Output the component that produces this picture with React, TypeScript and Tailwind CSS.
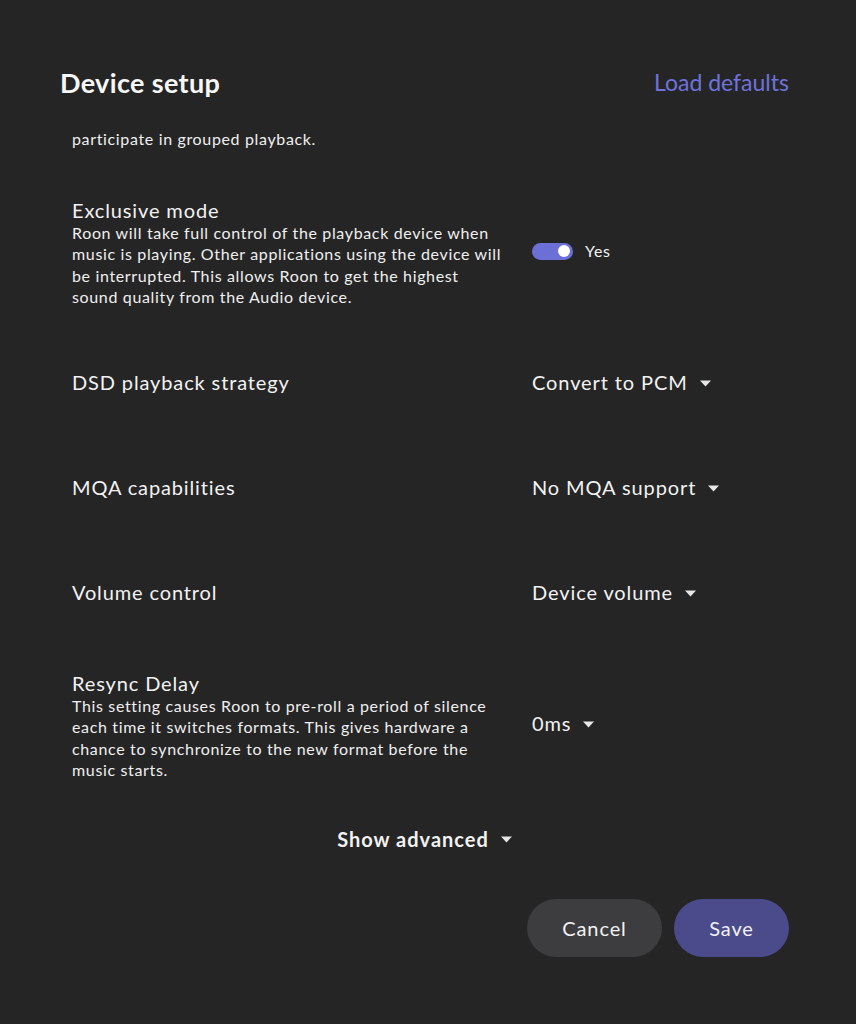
import React from "react";

function Caret({ className = "" }: { className?: string }) {
  return (
    <svg width="11" height="7" viewBox="0 0 11 7" className={className}>
      <polygon points="0,0.5 11,0.5 5.5,6.5" fill="#e6e6e6" />
    </svg>
  );
}

function SelectValue({ label, className = "" }: { label: string; className?: string }) {
  return (
    <div className={`flex items-center text-[20px] leading-[24px] tracking-[0.9px] text-[#f2f2f2] ${className}`}>
      <span>{label}</span>
      <Caret className="ml-[12px] mt-[4px]" />
    </div>
  );
}

function SimpleRow({ label, value, mt }: { label: string; value: string; mt: string }) {
  return (
    <div className={`flex items-center pl-[12px] ${mt}`}>
      <div className="w-[460px] shrink-0 text-[20px] leading-[24px] tracking-[0.87px] text-[#f2f2f2]">{label}</div>
      <SelectValue label={value} />
    </div>
  );
}

export default function App() {
  return (
    <div
      className="min-h-[1024px] w-full bg-[#252525] text-[#f2f2f2] antialiased"
      style={{ fontFamily: "Lato, 'Noto Sans', sans-serif" }}
    >
      <div className="pl-[60px] pr-[67px] pt-[66px]">
        <div className="flex items-start justify-between">
          <h1 className="text-[27px] leading-[33px] font-bold tracking-[0.35px] text-[#f7f7f7]">Device setup</h1>
          <button className="mt-[2px] text-[23px] leading-[29px] text-[#6f72dc]">Load defaults</button>
        </div>

        <div className="flex flex-col">
          <p className="mt-[29px] pl-[12px] text-[16px] leading-[21.5px] tracking-[0.65px] text-[#efefef]">
            participate in grouped playback.
          </p>

          {/* Exclusive mode */}
          <div className="mt-[48px] flex items-center pl-[12px]">
            <div className="w-[460px] shrink-0">
              <div className="text-[20px] leading-[24px] tracking-[0.87px] text-[#f2f2f2]">Exclusive mode</div>
              <div className="text-[16px] leading-[21.5px] tracking-[0.65px] text-[#efefef]">
                Roon will take full control of the playback device when
                <br />
                music is playing. Other applications using the device will
                <br />
                be interrupted. This allows Roon to get the highest
                <br />
                sound quality from the Audio device.
              </div>
            </div>
            <div className="mb-[3px] flex items-center">
              <div className="flex h-[17px] w-[41px] items-center justify-end rounded-full bg-[#6c6fd6] pr-[3px]">
                <div className="h-[12px] w-[12px] rounded-full bg-white" />
              </div>
              <span className="ml-[12px] text-[16px] leading-[20px] tracking-[0.65px] text-[#f2f2f2]">Yes</span>
            </div>
          </div>

          <SimpleRow label="DSD playback strategy" value="Convert to PCM" mt="mt-[62px]" />
          <SimpleRow label="MQA capabilities" value="No MQA support" mt="mt-[81px]" />
          <SimpleRow label="Volume control" value="Device volume" mt="mt-[81px]" />

          {/* Resync Delay */}
          <div className="mt-[67px] flex items-center pl-[12px]">
            <div className="w-[460px] shrink-0">
              <div className="text-[20px] leading-[24px] tracking-[0.87px] text-[#f2f2f2]">Resync Delay</div>
              <div className="text-[16px] leading-[21.5px] tracking-[0.65px] text-[#efefef]">
                This setting causes Roon to pre-roll a period of silence
                <br />
                each time it switches formats. This gives hardware a
                <br />
                chance to synchronize to the new format before the
                <br />
                music starts.
              </div>
            </div>
            <SelectValue label="0ms" className="mb-[6px]" />
          </div>

          {/* Show advanced */}
          <div className="mt-[46px] flex items-center justify-center">
            <span className="text-[20px] leading-[24px] font-bold tracking-[1px] text-[#f2f2f2]">Show advanced</span>
            <Caret className="ml-[12px] mt-[2px]" />
          </div>

          {/* Buttons */}
          <div className="mt-[48px] flex justify-end gap-[12px]">
            <button className="flex h-[58px] w-[135px] items-center justify-center rounded-full bg-[#3d3d3f] text-[20px] tracking-[0.9px] text-[#f2f2f2]">
              Cancel
            </button>
            <button className="flex h-[58px] w-[115px] items-center justify-center rounded-full bg-[#4b4b8c] text-[20px] tracking-[0.9px] text-[#f2f2f2]">
              Save
            </button>
          </div>
        </div>
      </div>
    </div>
  );
}
